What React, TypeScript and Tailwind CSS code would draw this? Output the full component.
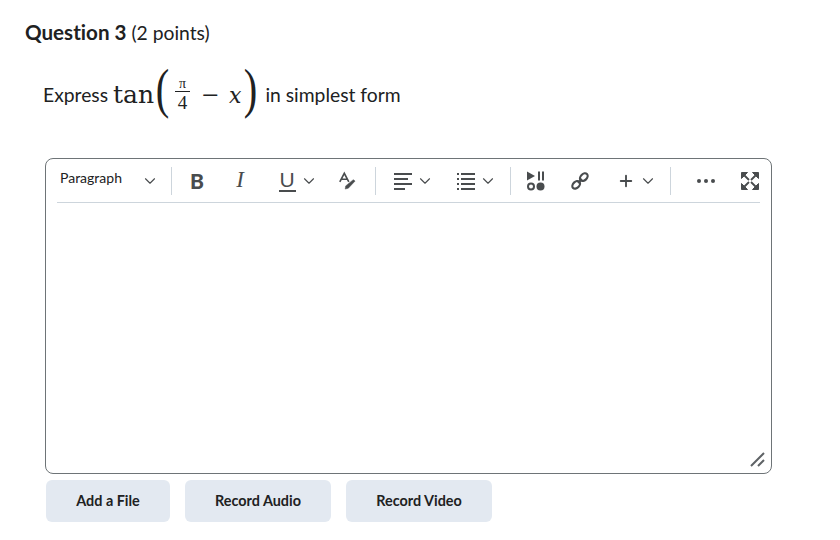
import { ChevronDown, Plus } from 'lucide-react'

const Chevron = () => (
  <ChevronDown size={18} strokeWidth={1.5} className="text-[#494c4e] shrink-0" />
)

const Divider = () => <div className="w-px h-[28px] bg-[#cdd5dc] shrink-0" />

const AlignIcon = () => (
  <svg width="18" height="18" viewBox="0 0 18 18" fill="#494c4e">
    <rect x="0" y="1" width="18" height="2" />
    <rect x="0" y="6" width="14" height="2" />
    <rect x="0" y="11" width="18" height="2" />
    <rect x="0" y="16" width="11" height="2" />
  </svg>
)

const ListIcon = () => (
  <svg width="18" height="18" viewBox="0 0 18 18" fill="#494c4e">
    <rect x="0" y="1" width="2" height="2" />
    <rect x="4" y="1" width="14" height="2" />
    <rect x="0" y="6" width="2" height="2" />
    <rect x="4" y="6" width="14" height="2" />
    <rect x="0" y="11" width="2" height="2" />
    <rect x="4" y="11" width="14" height="2" />
    <rect x="0" y="16" width="2" height="2" />
    <rect x="4" y="16" width="14" height="2" />
  </svg>
)

const MediaIcon = () => (
  <svg width="18" height="20" viewBox="0 0 18 20" fill="#494c4e">
    <path d="M0 0.500l8 4.500-8 4.500z" />
    <rect x="11" y="0.500" width="2" height="9" />
    <rect x="15" y="0.500" width="2" height="9" />
    <circle cx="4" cy="15.500" r="3" fill="none" stroke="#494c4e" strokeWidth="2" />
    <circle cx="13.500" cy="15.500" r="4" />
  </svg>
)

const LinkIcon = () => (
  <svg width="18" height="18" viewBox="0 0 18 18" fill="none" stroke="#494c4e" strokeWidth="2.200">
    <ellipse cx="12.800" cy="5.200" rx="4.400" ry="3.100" transform="rotate(-45 12.800 5.200)" />
    <ellipse cx="5.200" cy="12.800" rx="4.400" ry="3.100" transform="rotate(-45 5.200 12.800)" />
    <path d="M7 11l4-4" />
  </svg>
)

const ColorIcon = () => (
  <svg width="20" height="20" viewBox="0 0 20 20" fill="none" stroke="#494c4e">
    <path d="M2 11L7 1.500L12 11M3.800 8h6.400" strokeWidth="1.800" />
    <path d="M8 19l0.500-3.500L17 8.500l2 1.500-7.500 8z" fill="#494c4e" strokeWidth="0.500" />
  </svg>
)

const FullscreenIcon = () => (
  <svg width="18" height="18" viewBox="0 0 18 18" fill="#494c4e" stroke="#494c4e">
    <path d="M0.500 0.500h6l-6 6z" />
    <path d="M17.500 0.500h-6l6 6z" />
    <path d="M0.500 17.500h6l-6-6z" />
    <path d="M17.500 17.500h-6l6-6z" />
    <path d="M2 2l6 6M16 2l-6 6M2 16l6-6M16 16l-6-6" strokeWidth="1.800" />
  </svg>
)

const Tool = ({ w, children }: { w: string; children: React.ReactNode }) => (
  <div className={`${w} h-[28px] flex items-center justify-center shrink-0`}>{children}</div>
)

const Fraction = () => (
  <span className="inline-flex flex-col items-center w-[15px] ml-[5px] mr-[12px] font-['Liberation_Serif',serif] leading-none -mt-[2px]">
    <span className="text-[14px] h-[15px] border-b border-[#202122] w-full text-center">π</span>
    <span className="text-[19px] mt-[1px]">4</span>
  </span>
)

const Paren = ({ c }: { c: string }) => (
  <span className="font-['Liberation_Serif',serif] text-[54px] leading-none h-[54px] scale-x-75 w-[15px] flex justify-center -mt-[12px]">{c}</span>
)

const App = () => {
  return (
    <div className="w-[840px] h-[540px] bg-white text-[#202122] font-['Lato',sans-serif] [font-variant-ligatures:none] pl-[25px] pt-[20px]">
      <h2 className="text-[19.300px] leading-[24px] h-[24px]">
        <strong className="font-bold text-[20.600px]">Question 3</strong> <span>(2 points)</span>
      </h2>

      {/* question text with the formula */}
      <div className="flex items-center h-[60px] mt-[21px] ml-[18px] text-[19.300px]">
        <span>Express</span>
        <span className="font-['DejaVu_Serif',serif] text-[25px] ml-[5px]">tan</span>
        <div className="w-[1px] shrink-0" />
        <Paren c="(" />
        <Fraction />
        <span className="font-['Liberation_Serif',serif] text-[30px] leading-none">−</span>
        <span className="font-['DejaVu_Serif',serif] italic text-[22px] ml-[10px] mr-[2px]">x</span>
        <Paren c=")" />
        <span className="ml-[7px]">in simplest form</span>
      </div>

      <div className="w-[727px] h-[316px] ml-[20px] mt-[33px] border border-[#6e7477] rounded-[8px] relative">
        <div className="mx-[11px] h-[44px] border-b border-[#cdd5dc] flex items-center">
          <div className="w-[114px] flex items-center text-[14px] text-[#202122] pl-[3px] shrink-0">
            <span className="w-[81px] mb-[7px]">Paragraph</span>
            <Chevron />
          </div>
          <Divider />
          <Tool w="w-[50px]"><span className="text-[21px] font-black text-[#494c4e]">B</span></Tool>
          <Tool w="w-[36px]"><span className="text-[23px] italic text-[#494c4e] font-['Liberation_Serif',serif]">I</span></Tool>
          <Tool w="w-[80px]">
            <div className="flex items-center gap-[4px]">
              <span className="w-[17px] text-center text-[21px] leading-[21px] border-b-2 border-[#494c4e] text-[#494c4e] font-['Liberation_Sans',sans-serif]">U</span>
              <Chevron />
            </div>
          </Tool>
          <Tool w="w-[18px]"><ColorIcon /></Tool>
          <div className="w-[19px] shrink-0" />
          <Divider />
          <Tool w="w-[76px]">
            <div className="flex items-center gap-[4px]"><AlignIcon /><Chevron /></div>
          </Tool>
          <Tool w="w-[50px]">
            <div className="flex items-center gap-[4px]"><ListIcon /><Chevron /></div>
          </Tool>
          <div className="w-[8px] shrink-0" />
          <Divider />
          <Tool w="w-[50px]"><MediaIcon /></Tool>
          <Tool w="w-[38px]"><LinkIcon /></Tool>
          <div className="w-[71px] h-[28px] flex items-center gap-[4px] pl-[18px] shrink-0">
            <Plus size={18} strokeWidth={2.5} className="text-[#494c4e] shrink-0" />
            <Chevron />
          </div>
          <Divider />
          <Tool w="w-[70px]">
            <div className="flex gap-[3px]">
              <span className="size-[4px] rounded-full bg-[#494c4e]" />
              <span className="size-[4px] rounded-full bg-[#494c4e]" />
              <span className="size-[4px] rounded-full bg-[#494c4e]" />
            </div>
          </Tool>
          <Tool w="w-[18px]"><FullscreenIcon /></Tool>
        </div>

        {/* resize grip */}
        <svg width="16" height="16" viewBox="0 0 16 16" stroke="#5f6366" strokeWidth="2" className="absolute right-[5px] bottom-[6px]">
          <path d="M1 15L14 2M8 15L14 9" />
        </svg>
      </div>

      <div className="flex gap-[15px] ml-[21px] mt-[6px]">
        <button className="w-[124px] h-[42px] rounded-[6px] bg-[#e3e9f1] text-[14.400px] font-bold">Add a File</button>
        <button className="w-[146px] h-[42px] rounded-[6px] bg-[#e3e9f1] text-[14.400px] font-bold">Record Audio</button>
        <button className="w-[146px] h-[42px] rounded-[6px] bg-[#e3e9f1] text-[14.400px] font-bold">Record Video</button>
      </div>
    </div>
  )
}

export default App
